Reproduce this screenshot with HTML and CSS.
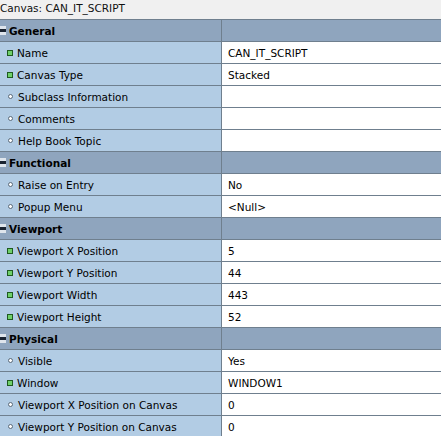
FILE: index.html
```html
<!DOCTYPE html>
<html>
<head>
<meta charset="utf-8">
<link rel="stylesheet" href="styles.css">
</head>
<body>
<div class="title">Canvas: CAN_IT_SCRIPT</div>
<div class="grid">
  <div class="hdr"><span class="minus"></span>General</div><div class="hv"></div>
  <div class="name"><span class="sq"></span>Name</div><div class="val">CAN_IT_SCRIPT</div>
  <div class="name"><span class="sq"></span>Canvas Type</div><div class="val">Stacked</div>
  <div class="name"><span class="dot"></span>Subclass Information</div><div class="val"></div>
  <div class="name"><span class="dot"></span>Comments</div><div class="val"></div>
  <div class="name"><span class="dot"></span>Help Book Topic</div><div class="val"></div>
  <div class="hdr"><span class="minus"></span>Functional</div><div class="hv"></div>
  <div class="name"><span class="dot"></span>Raise on Entry</div><div class="val">No</div>
  <div class="name"><span class="dot"></span>Popup Menu</div><div class="val">&lt;Null&gt;</div>
  <div class="hdr"><span class="minus"></span>Viewport</div><div class="hv"></div>
  <div class="name"><span class="sq"></span>Viewport X Position</div><div class="val">5</div>
  <div class="name"><span class="sq"></span>Viewport Y Position</div><div class="val">44</div>
  <div class="name"><span class="sq"></span>Viewport Width</div><div class="val">443</div>
  <div class="name"><span class="sq"></span>Viewport Height</div><div class="val">52</div>
  <div class="hdr"><span class="minus"></span>Physical</div><div class="hv"></div>
  <div class="name"><span class="dot"></span>Visible</div><div class="val">Yes</div>
  <div class="name"><span class="sq"></span>Window</div><div class="val">WINDOW1</div>
  <div class="name"><span class="dot"></span>Viewport X Position on Canvas</div><div class="val">0</div>
  <div class="name"><span class="dot"></span>Viewport Y Position on Canvas</div><div class="val">0</div>
</div>
</body>
</html>
```
FILE: styles.css
```css
html, body {
  margin: 0;
  padding: 0;
  background: #f0f0f0;
  overflow: hidden;
}
body {
  font-family: "DejaVu Sans", sans-serif;
  font-size: 10.5px;
  color: #000;
  width: 441px;
  height: 436px;
}
.title {
  height: 19px;
  line-height: 17px;
  font-size: 10.5px;
  color: #111;
  white-space: nowrap;
}
.grid {
  display: grid;
  grid-template-columns: 222px 1fr;
  grid-auto-rows: 22px;
  background: #f0f0f0;
}
.grid > div {
  border-top: 1px solid #6f7f8e;
  box-sizing: border-box;
  display: flex;
  align-items: center;
  white-space: nowrap;
}
.hdr {
  background: #8fa5be;
  font-weight: bold;
  font-size: 10.5px;
  border-right: 1px solid #6f7f8e;
}
.hv {
  background: #8fa5be;
}
.name {
  background: #b2cce4;
  border-right: 1px solid #6f7f8e;
  padding-left: 7px;
}
.val {
  background: #fff;
  padding-left: 6px;
}
.minus {
  display: inline-block;
  width: 9px;
  height: 9px;
  margin-left: -3px;
  margin-right: 3px;
  background: #dfe5ec;
  position: relative;
  flex: none;
}
.minus::after {
  content: "";
  position: absolute;
  left: 1px;
  right: 0;
  top: 3px;
  height: 3px;
  background: #1a2330;
}
.sq {
  display: inline-block;
  width: 4px;
  height: 4px;
  border: 1px solid #1f5a1f;
  background: #6fd06a;
  margin-right: 4px;
  flex: none;
}
.dot {
  display: inline-block;
  width: 3px;
  height: 3px;
  border: 1px solid #5a6a7a;
  border-radius: 50%;
  background: #fff;
  margin: 0 5px 0 1px;
  flex: none;
}
```
